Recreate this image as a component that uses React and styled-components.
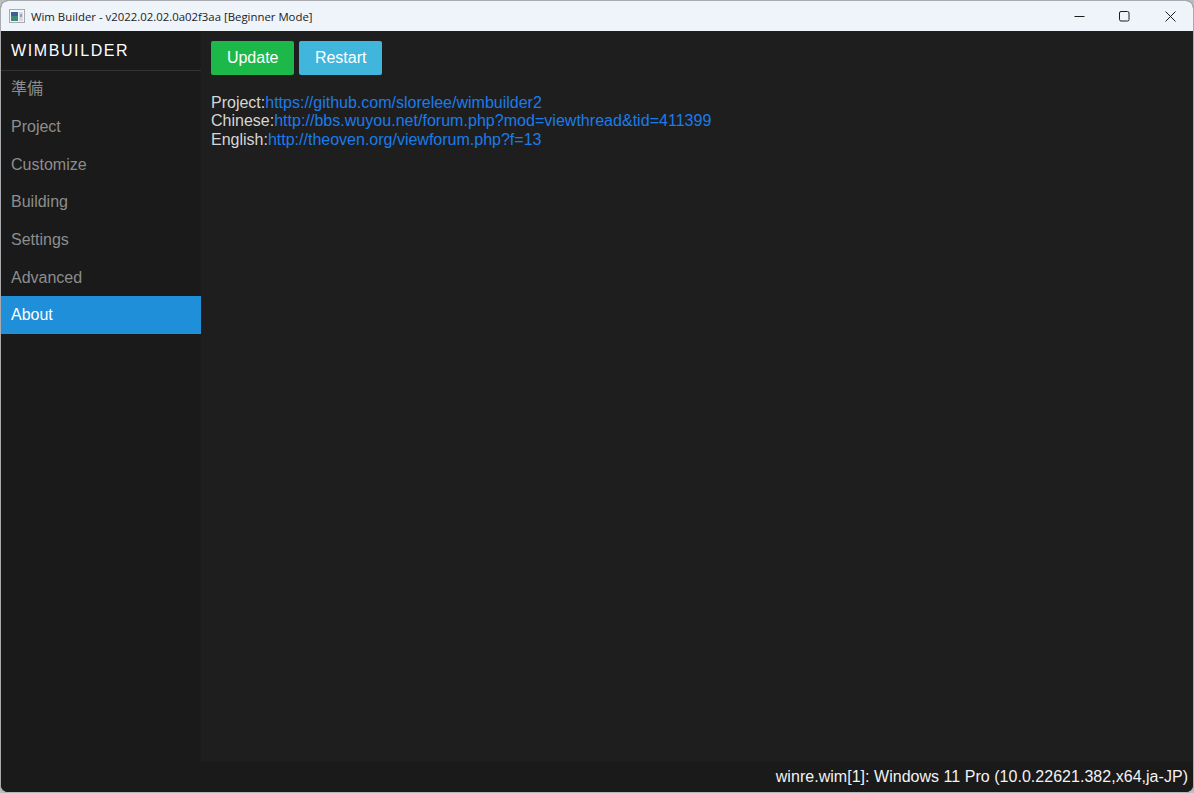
import React from "react";
import styled, { createGlobalStyle } from "styled-components";

const GlobalStyle = createGlobalStyle`
  html, body {
    margin: 0;
    padding: 0;
    background: #b9bcc0;
  }
  * {
    box-sizing: border-box;
  }
`;

const AppWindow = styled.div`
  width: 1194px;
  height: 793px;
  display: flex;
  flex-direction: column;
  overflow: hidden;
  border: 1px solid #a9abae;
  border-bottom-color: #b5b7ba;
  border-radius: 8px;
  background: #1a1a1a;
  font-family: "Liberation Sans", Arial, sans-serif;
`;

const TitleBar = styled.div`
  height: 30px;
  flex: none;
  display: flex;
  align-items: center;
  padding-left: 8px;
  background: #eff3fa;
`;

const TitleText = styled.span`
  margin-left: 6px;
  font-family: "Open Sans", "Noto Sans", sans-serif;
  font-size: 11.38px;
  color: #222;
  white-space: nowrap;
`;

const WindowControls = styled.div`
  margin-left: auto;
  display: flex;
  height: 100%;
`;

const WindowButton = styled.div`
  width: 45px;
  display: flex;
  align-items: center;
  justify-content: center;
  padding-right: ${(p) => p.$shift || 0}px;
  color: #1c1c1c;
`;

const Body = styled.div`
  flex: 1;
  min-height: 0;
  display: flex;
`;

const Sidebar = styled.nav`
  width: 200px;
  flex: none;
  background: #1a1a1a;
`;

const Brand = styled.div`
  height: 39.5px;
  padding: 10px 0 0 10px;
  border-bottom: 1px solid #333;
  font-size: 16px;
  line-height: 20px;
  letter-spacing: 1.6px;
  color: #fff;
`;

const NavItem = styled.div`
  height: 37.65px;
  padding-left: 10px;
  display: flex;
  align-items: center;
  font-size: 16px;
  line-height: 18px;
  color: ${(p) => (p.$active ? "#fff" : "#8d8d8d")};
  background: ${(p) => (p.$active ? "#1e8fd8" : "transparent")};
  font-family: "Liberation Sans", "Noto Sans CJK JP", sans-serif;
`;

const Content = styled.main`
  flex: 1;
  padding: 10px;
  background: #1e1e1e;
`;

const Toolbar = styled.div`
  display: flex;
  gap: 4.6px;
  margin-bottom: 19px;
`;

const ActionButton = styled.button`
  width: 83.4px;
  height: 34px;
  padding: 0;
  border: 0;
  border-radius: 2px;
  font-family: inherit;
  font-size: 16px;
  color: #fff;
  background: ${(p) => p.$bg};
`;

const LinkRow = styled.div`
  font-size: 16px;
  line-height: 18.4px;
  color: #d6d6d6;
`;

const Anchor = styled.a`
  color: #1a7ceb;
  text-decoration: none;
  letter-spacing: ${(p) => p.$spacing || 0}px;
`;

const StatusBar = styled.div`
  height: 30px;
  flex: none;
  padding: 0 5px 1px 0;
  display: flex;
  align-items: center;
  justify-content: flex-end;
  background: #1a1a1a;
  font-size: 16px;
  letter-spacing: 0.03px;
  color: #f2f2f2;
  white-space: nowrap;
`;

const AppIcon = () => (
  <svg width="16" height="14" viewBox="0 0 16 14">
    <rect x="0.5" y="0.5" width="15" height="13" fill="#f4f5f6" stroke="#a8acb0" />
    <rect x="2" y="3" width="7" height="9" fill="#3f8a7c" />
    <rect x="2" y="3" width="7" height="4" fill="#35609c" />
    <rect x="10" y="3" width="4" height="9" fill="#d5dbe2" />
    <rect x="11" y="5" width="2" height="3" fill="#8fa3ba" />
  </svg>
);

const links = [
  { label: "Project:", url: "https://github.com/slorelee/wimbuilder2" },
  { label: "Chinese:", url: "http://bbs.wuyou.net/forum.php?mod=viewthread&tid=411399", spacing: 0.03 },
  { label: "English:", url: "http://theoven.org/viewforum.php?f=13" },
];

const menu = ["準備", "Project", "Customize", "Building", "Settings", "Advanced", "About"];

export default function App() {
  return (
    <AppWindow>
      <GlobalStyle />
      <TitleBar>
        <AppIcon />
        <TitleText>Wim Builder - v2022.02.02.0a02f3aa [Beginner Mode]</TitleText>
        <WindowControls>
          <WindowButton $shift={2}>
            <svg width="11" height="11" viewBox="0 0 11 11">
              <path d="M0.5 5.5h10" stroke="currentColor" fill="none" />
            </svg>
          </WindowButton>
          <WindowButton $shift={2}>
            <svg width="11" height="11" viewBox="0 0 11 11">
              <rect x="0.5" y="0.5" width="9.5" height="9.5" rx="1.5" stroke="currentColor" fill="none" />
            </svg>
          </WindowButton>
          <WindowButton>
            <svg width="11" height="11" viewBox="0 0 11 11">
              <path d="M0.5 0.5l10 10M10.5 0.5l-10 10" stroke="currentColor" fill="none" />
            </svg>
          </WindowButton>
        </WindowControls>
      </TitleBar>
      <Body>
        <Sidebar>
          <Brand>WIMBUILDER</Brand>
          {menu.map((item) => (
            <NavItem key={item} $active={item === "About"}>
              {item}
            </NavItem>
          ))}
        </Sidebar>
        <Content>
          <Toolbar>
            <ActionButton $bg="#1db84a">Update</ActionButton>
            <ActionButton $bg="#40b6dc">Restart</ActionButton>
          </Toolbar>
          {links.map(({ label, url, spacing }) => (
            <LinkRow key={label}>
              {label}
              <Anchor href={url} $spacing={spacing}>{url}</Anchor>
            </LinkRow>
          ))}
        </Content>
      </Body>
      <StatusBar>winre.wim[1]: Windows 11 Pro (10.0.22621.382,x64,ja-JP)</StatusBar>
    </AppWindow>
  );
}
